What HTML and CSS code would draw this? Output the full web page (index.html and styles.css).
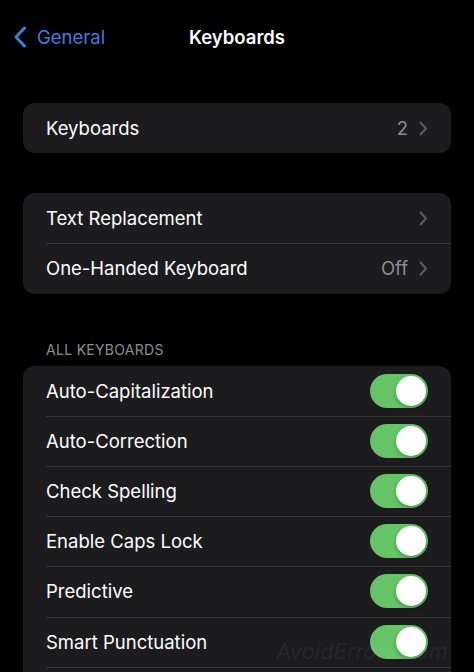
FILE: index.html
```html
<!DOCTYPE html>
<html lang="en">
<head>
  <meta charset="UTF-8">
  <meta name="viewport" content="width=device-width, initial-scale=1.0">
  <title>Keyboards</title>
  <link rel="stylesheet" href="styles.css">
</head>
<body>

  <div class="screen">
    <!-- Navigation bar -->
    <div class="navbar">
      <a class="back" href="#">
        <svg class="back-icon" width="14" height="22" viewBox="0 0 14 22">
          <path d="M11.5 2 L3 11 L11.5 20" fill="none" stroke="#3f7ee0" stroke-width="3" stroke-linecap="round" stroke-linejoin="round"/>
        </svg>
        <span>General</span>
      </a>
      <h1 class="title">Keyboards</h1>
    </div>

    <!-- Keyboards count -->
    <div class="group">
      <div class="row">
        <span class="label">Keyboards</span>
        <span class="value">2</span>
        <svg class="chevron" width="9" height="15" viewBox="0 0 9 15"><path d="M1.5 1.5 L7 7.5 L1.5 13.5" fill="none" stroke="#5b5b60" stroke-width="2" stroke-linecap="round" stroke-linejoin="round"/></svg>
      </div>
    </div>

    <div class="group">
      <div class="row">
        <span class="label">Text Replacement</span>
        <svg class="chevron" width="9" height="15" viewBox="0 0 9 15"><path d="M1.5 1.5 L7 7.5 L1.5 13.5" fill="none" stroke="#5b5b60" stroke-width="2" stroke-linecap="round" stroke-linejoin="round"/></svg>
      </div>
      <div class="row">
        <span class="label">One-Handed Keyboard</span>
        <span class="value">Off</span>
        <svg class="chevron" width="9" height="15" viewBox="0 0 9 15"><path d="M1.5 1.5 L7 7.5 L1.5 13.5" fill="none" stroke="#5b5b60" stroke-width="2" stroke-linecap="round" stroke-linejoin="round"/></svg>
      </div>
    </div>

    <div class="section-header">ALL KEYBOARDS</div>
    <div class="group group-last">
      <div class="row">
        <span class="label">Auto-Capitalization</span>
        <span class="toggle"><span class="knob"></span></span>
      </div>
      <div class="row">
        <span class="label">Auto-Correction</span>
        <span class="toggle"><span class="knob"></span></span>
      </div>
      <div class="row">
        <span class="label">Check Spelling</span>
        <span class="toggle"><span class="knob"></span></span>
      </div>
      <div class="row">
        <span class="label">Enable Caps Lock</span>
        <span class="toggle"><span class="knob"></span></span>
      </div>
      <div class="row">
        <span class="label">Predictive</span>
        <span class="toggle"><span class="knob"></span></span>
      </div>
      <div class="row">
        <span class="label">Smart Punctuation</span>
        <span class="toggle"><span class="knob"></span></span>
      </div>
      <div class="row"></div>
    </div>

    <div class="watermark">AvoidErrors.com</div>
  </div>

</body>
</html>
```

FILE: styles.css
```css
html, body {
  margin: 0;
  padding: 0;
  background-color: #000;
  height: 100%;
  overflow: hidden;
}
body {
  font-family: Inter, "Noto Sans", sans-serif;
  color: #fff;
}
.screen {
  position: relative;
  width: 474px;
  height: 672px;
  overflow: hidden;
}
.navbar {
  position: relative;
  height: 74px;
  display: flex;
  align-items: center;
  justify-content: center;
}
.back {
  position: absolute;
  left: 13px;
  top: 26px;
  display: flex;
  align-items: center;
  gap: 10px;
  color: #3f7ee0;
  text-decoration: none;
  font-size: 18.5px;
}
.back-icon {
  display: block;
}
.title {
  margin: 0;
  font-size: 18.5px;
  font-weight: 600;
}
.group {
  margin: 29px 23px 40px;
  background-color: #1c1c1e;
  border-radius: 12px;
  overflow: hidden;
}
.group-last {
  margin-top: 0;
}
.row {
  display: flex;
  align-items: center;
  height: 50.2px;
  padding: 0 23px;
  position: relative;
}
.row + .row::before {
  content: "";
  position: absolute;
  top: 0;
  left: 23px;
  right: 0;
  height: 1px;
  background-color: #363638;
}
.label {
  flex: 1;
  font-size: 18.5px;
}
.value {
  color: #8d8d93;
  font-size: 18.5px;
  margin-right: 11px;
}
.chevron {
  display: block;
}
.section-header {
  margin: 0 46px 8px;
  padding-top: 7px;
  font-size: 14px;
  color: #8d8d93;
  letter-spacing: 0.3px;
}
.toggle {
  width: 58px;
  height: 34px;
  border-radius: 17px;
  background-color: #65c466;
  display: flex;
  align-items: center;
  justify-content: flex-end;
  padding: 0 2px;
  box-sizing: border-box;
}
.knob {
  width: 30px;
  height: 30px;
  border-radius: 50%;
  background-color: #fff;
  box-shadow: 0 2px 4px rgba(0, 0, 0, 0.25);
}
.watermark {
  position: absolute;
  right: 26px;
  top: 638px;
  font-size: 22px;
  font-style: italic;
  color: rgba(255, 255, 255, 0.06);
}
```
